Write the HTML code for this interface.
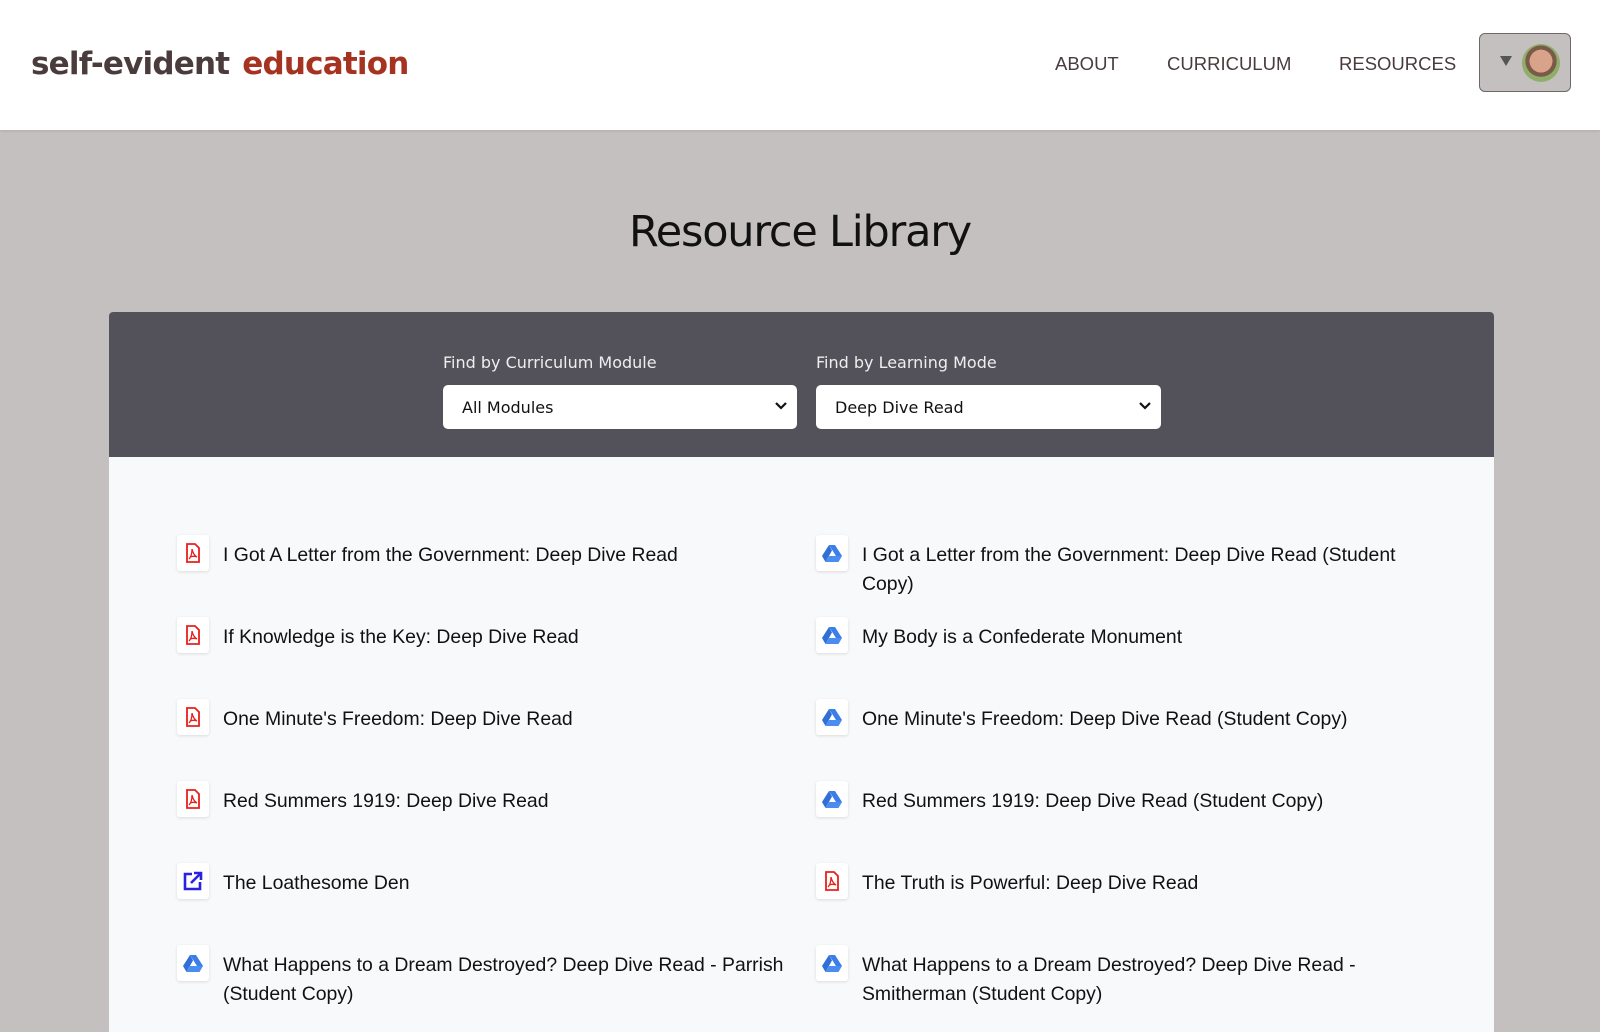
<!DOCTYPE html>
<html><head><meta charset="utf-8"><style>
*{box-sizing:border-box;margin:0;padding:0}
body{width:1600px;height:1017px;overflow:hidden;background:#c4c0c0;font-family:"Liberation Sans",sans-serif}
.hdr{position:absolute;left:0;top:0;width:1600px;height:130px;background:#fff;box-shadow:0 1px 3px rgba(0,0,0,.1)}
.logo{position:absolute;left:31px;top:42px;font-family:"DejaVu Sans",sans-serif;font-size:31px;font-weight:bold;letter-spacing:-0.8px;line-height:44px;white-space:nowrap}
.logo .a{color:#4a3b3d}.logo .b{color:#a63322;margin-left:13px}
.nav{position:absolute;top:52px;font-size:18.5px;color:#4a3c3c;line-height:24px}
.av{position:absolute;left:1479px;top:33px;width:92px;height:59px;border:1.5px solid #6e6868;border-radius:6px;background:#c4c0c0}
.av .tri{position:absolute;left:20px;top:22px;width:0;height:0;border-left:6px solid transparent;border-right:6px solid transparent;border-top:10px solid #555}
.av .ph{position:absolute;left:42px;top:10px;width:38px;height:38px;border-radius:50%;background:radial-gradient(circle at 50% 45%,#d9a38a 0 40%,#7a5a48 41% 55%,#8fae6a 56%)}
h1{position:absolute;left:0;width:1600px;top:207px;text-align:center;font-weight:normal;font-size:43px;color:#111;font-family:"DejaVu Sans",sans-serif;letter-spacing:-1.2px}
.panel{position:absolute;left:109px;top:312px;width:1385px;height:720px;background:#f8f9fb;border-radius:4px 4px 0 0;overflow:hidden}
.dark{height:145px;background:#53525b}
.lbl{position:absolute;top:41px;color:#eee;font-size:16px;font-family:"DejaVu Sans",sans-serif}
.sel{position:absolute;top:73px;height:44px;background:#fff;border-radius:5px;font-size:16px;font-family:"DejaVu Sans",sans-serif;color:#111;padding:13px 19px}
.sel svg{position:absolute;right:10px;top:16px}
.it{position:absolute;font-size:19.4px;color:#111;line-height:29px}
.ic{position:absolute;width:32px;height:36px;background:#fff;border-radius:3px;box-shadow:0 1px 3px rgba(0,0,0,.12)}
.ic svg{position:absolute;left:6px;top:8px}
</style></head><body>
<div class="hdr">
<div class="logo"><span class="a">self-evident</span><span class="b">education</span></div>
<div class="nav" style="left:1055px">ABOUT</div>
<div class="nav" style="left:1167px">CURRICULUM</div>
<div class="nav" style="left:1339px">RESOURCES</div>
<div class="av"><div class="tri"></div><div class="ph"></div></div>
</div>
<h1>Resource Library</h1>
<div class="panel">
<div class="dark"></div>
<div class="lbl" style="left:334px">Find by Curriculum Module</div>
<div class="lbl" style="left:707px">Find by Learning Mode</div>
<div class="sel" style="left:334px;width:354px">All Modules<svg width="12" height="10" viewBox="0 0 12 10"><path d="M1 2l5 5 5-5" stroke="#111" stroke-width="2.2" fill="none"/></svg></div>
<div class="sel" style="left:707px;width:345px">Deep Dive Read<svg width="12" height="10" viewBox="0 0 12 10"><path d="M1 2l5 5 5-5" stroke="#111" stroke-width="2.2" fill="none"/></svg></div>
</div>
<svg width="0" height="0" style="position:absolute"><defs>
<symbol id="pdf" viewBox="0 0 20 20"><path d="M4 1h8l4 4v14H4z" fill="none" stroke="#e8201c" stroke-width="1.8"/><path d="M9 6c1 4 2 6 5 8M9 6c0 4-1 8-3 10M7 14c3-1 5-1 7 0" fill="none" stroke="#e8201c" stroke-width="1.3"/></symbol>
<symbol id="drv" viewBox="0 0 20 20"><path d="M7 2h6l7 11h-6z" fill="#3b7de9"/><path d="M7 2l3 5.5L3.5 19 0 13z" fill="#2f6fd6"/><path d="M3.5 19l3.5-6h13l-3.5 6z" fill="#4a8cf0"/></symbol>
<symbol id="ext" viewBox="0 0 20 20"><path d="M9 3H2v15h15v-7" fill="none" stroke="#2a22e0" stroke-width="2.6"/><path d="M8 12L18 2M11 2h7v7" fill="none" stroke="#2a22e0" stroke-width="2.6"/></symbol>
</defs></svg>

<div class="ic" style="left:177px;top:535px"><svg width="20" height="20"><use href="#pdf"/></svg></div>
<div class="it" style="left:223px;top:541px">I Got A Letter from the Government: Deep Dive Read</div>
<div class="ic" style="left:816px;top:535px"><svg width="20" height="20"><use href="#drv"/></svg></div>
<div class="it" style="left:862px;top:541px;width:560px">I Got a Letter from the Government: Deep Dive Read (Student Copy)</div>

<div class="ic" style="left:177px;top:617px"><svg width="20" height="20"><use href="#pdf"/></svg></div>
<div class="it" style="left:223px;top:623px">If Knowledge is the Key: Deep Dive Read</div>
<div class="ic" style="left:816px;top:617px"><svg width="20" height="20"><use href="#drv"/></svg></div>
<div class="it" style="left:862px;top:623px">My Body is a Confederate Monument</div>

<div class="ic" style="left:177px;top:699px"><svg width="20" height="20"><use href="#pdf"/></svg></div>
<div class="it" style="left:223px;top:705px">One Minute's Freedom: Deep Dive Read</div>
<div class="ic" style="left:816px;top:699px"><svg width="20" height="20"><use href="#drv"/></svg></div>
<div class="it" style="left:862px;top:705px">One Minute's Freedom: Deep Dive Read (Student Copy)</div>

<div class="ic" style="left:177px;top:781px"><svg width="20" height="20"><use href="#pdf"/></svg></div>
<div class="it" style="left:223px;top:787px">Red Summers 1919: Deep Dive Read</div>
<div class="ic" style="left:816px;top:781px"><svg width="20" height="20"><use href="#drv"/></svg></div>
<div class="it" style="left:862px;top:787px">Red Summers 1919: Deep Dive Read (Student Copy)</div>

<div class="ic" style="left:177px;top:863px"><svg width="20" height="20"><use href="#ext"/></svg></div>
<div class="it" style="left:223px;top:869px">The Loathesome Den</div>
<div class="ic" style="left:816px;top:863px"><svg width="20" height="20"><use href="#pdf"/></svg></div>
<div class="it" style="left:862px;top:869px">The Truth is Powerful: Deep Dive Read</div>

<div class="ic" style="left:177px;top:945px"><svg width="20" height="20"><use href="#drv"/></svg></div>
<div class="it" style="left:223px;top:951px;width:570px">What Happens to a Dream Destroyed? Deep Dive Read - Parrish (Student Copy)</div>
<div class="ic" style="left:816px;top:945px"><svg width="20" height="20"><use href="#drv"/></svg></div>
<div class="it" style="left:862px;top:951px;width:510px">What Happens to a Dream Destroyed? Deep Dive Read - Smitherman (Student Copy)</div>
</body></html>
